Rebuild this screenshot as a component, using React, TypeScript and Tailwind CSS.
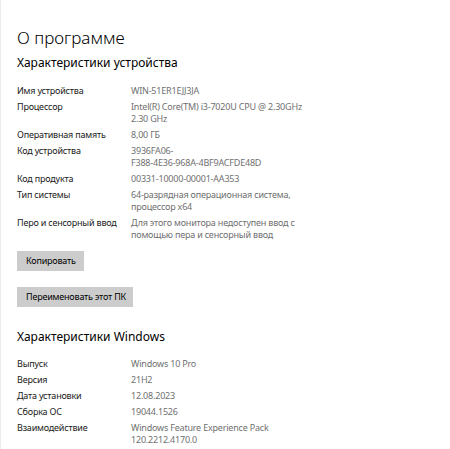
const font = { fontFamily: '"Noto Sans", "Open Sans", sans-serif' }

type Row = { label: string; value: string[] }

const device: Row[] = [
  { label: 'Имя устройства', value: ['WIN-51ER1EJJ3JA'] },
  { label: 'Процессор', value: ['Intel(R) Core(TM) i3-7020U CPU @ 2.30GHz', '2.30 GHz'] },
  { label: 'Оперативная память', value: ['8,00 ГБ'] },
  { label: 'Код устройства', value: ['3936FA06-', 'F388-4E36-968A-4BF9ACFDE48D'] },
  { label: 'Код продукта', value: ['00331-10000-00001-AA353'] },
  { label: 'Тип системы', value: ['64-разрядная операционная система,', 'процессор x64'] },
  { label: 'Перо и сенсорный ввод', value: ['Для этого монитора недоступен ввод с', 'помощью пера и сенсорный ввод'] },
]

const windows: Row[] = [
  { label: 'Выпуск', value: ['Windows 10 Pro'] },
  { label: 'Версия', value: ['21H2'] },
  { label: 'Дата установки', value: ['12.08.2023'] },
  { label: 'Сборка ОС', value: ['19044.1526'] },
  { label: 'Взаимодействие', value: ['Windows Feature Experience Pack', '120.2212.4170.0'] },
]

function Specs({ rows }: { rows: Row[] }) {
  return (
    <div className="flex flex-col gap-[4px]">
      {rows.map((r) => (
        <div key={r.label} className="flex text-[9px] leading-[12px] tracking-[-0.2px]">
          <div className="w-[114px] shrink-0 whitespace-nowrap text-[#1a1a1a]">{r.label}</div>
          <div className="whitespace-nowrap text-[#707070]">
            {r.value.map((v) => (
              <div key={v}>{v}</div>
            ))}
          </div>
        </div>
      ))}
    </div>
  )
}

export default function App() {
  return (
    <div className="h-[449px] w-[450px] overflow-hidden border-l border-[#ececec] bg-white pl-[16px] pt-[27px]" style={font}>
      <h1 className="text-[17px] font-light leading-[22px] text-black">О программе</h1>
      <h2 className="mt-[6px] text-[12px] leading-[16px] text-black">Характеристики устройства</h2>
      <div className="mt-[14px]">
        <Specs rows={device} />
      </div>
      <div className="mt-[10px] flex flex-col items-start gap-[16px]">
        <button className="h-[20px] w-[67px] whitespace-nowrap bg-[#cccccc] px-[9px] text-left text-[9px] tracking-[-0.2px] text-black">Копировать</button>
        <button className="h-[20px] w-[116px] whitespace-nowrap bg-[#cccccc] px-[9px] text-left text-[9px] tracking-[-0.2px] text-black">Переименовать этот ПК</button>
      </div>
      <h2 className="mt-[22px] text-[12px] leading-[16px] text-black">Характеристики Windows</h2>
      <div className="mt-[13px]">
        <Specs rows={windows} />
      </div>
    </div>
  )
}
